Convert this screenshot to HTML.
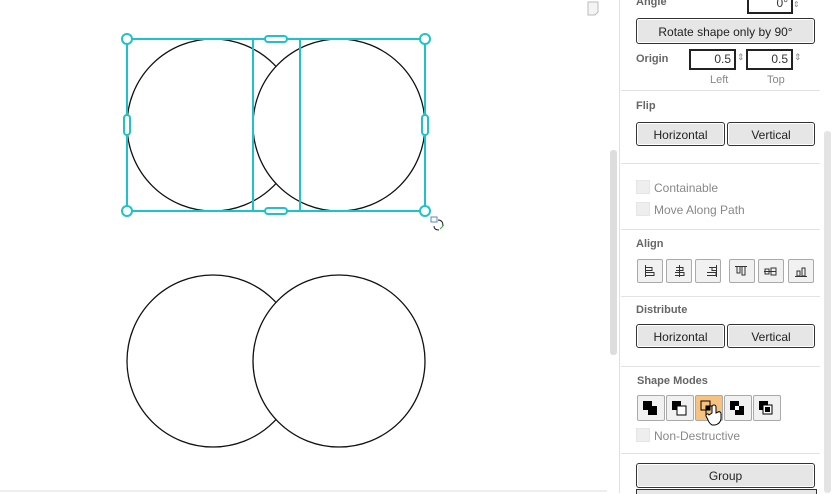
<!DOCTYPE html>
<html><head><style>
body{margin:0;width:838px;height:493px;overflow:hidden;background:#fff;font-family:"Liberation Sans",sans-serif;font-size:12px;color:#333;position:relative}
.a{position:absolute}
.btn{position:absolute;border:1px solid #333;border-radius:3px;background:#e6e6e6;box-shadow:inset 0 0 0 1px #fff;text-align:center;line-height:24px;font-size:12px;color:#222;height:24px;box-sizing:border-box}
.lbl{position:absolute;font-size:11px;color:#666;font-weight:bold}
.hr{position:absolute;left:621px;width:199px;height:1px;background:#e2e2e2}
.cb{position:absolute;width:12px;height:12px;background:#eee;border:1px solid #e6e6e6}
.ct{position:absolute;font-size:12px;color:#888}
.ib{position:absolute;top:259px;width:26px;height:24px;border:1px solid #aaa;border-radius:2px;background:#f1f1f1;box-sizing:border-box}
.sb{position:absolute;top:395px;width:28px;height:26px;border:1px solid #aaa;border-radius:2px;background:#f1f1f1;box-sizing:border-box}
.in{position:absolute;border:2px solid #222;height:21px;box-sizing:border-box;background:#fff;text-align:right;padding-right:3px;font-size:12px;line-height:17px}
</style></head><body>
<svg class="a" style="left:0;top:0" width="610" height="493">
<g fill="#fff" stroke="#111" stroke-width="1.3">
<circle cx="213" cy="125" r="86"/><circle cx="339" cy="125" r="86"/>
<circle cx="213" cy="361" r="86"/><circle cx="339" cy="361" r="86"/>
</g>
<g stroke="#1cc3cc" stroke-width="2" fill="#fff">
<rect x="127" y="39" width="298" height="172" fill="none"/>
<line x1="253" y1="39" x2="253" y2="211"/><line x1="300" y1="39" x2="300" y2="211"/>
<circle cx="127" cy="39" r="5"/><circle cx="425" cy="39" r="5"/><circle cx="127" cy="211" r="5"/><circle cx="425" cy="211" r="5"/>
<rect x="265" y="36" width="22" height="6" rx="3"/><rect x="265" y="208" width="22" height="6" rx="3"/>
<rect x="124" y="115" width="6" height="20" rx="3"/><rect x="422" y="115" width="6" height="20" rx="3"/>
</g>
<rect x="431" y="217" width="6" height="5" fill="none" stroke="#5588cc"/>
<path d="M438 220 q5 0 5 6 M434 226 q0 4 5 4" stroke="#222" fill="none"/><path d="M440 229 l3 -3" stroke="#3a3"/>
<path d="M588 2h10v10l-3 3h-7z" fill="#f4f4f4" stroke="#bbb"/>
<line x1="0" y1="491" x2="607" y2="491" stroke="#ddd"/>
</svg>
<div class="a" style="left:610px;top:150px;width:7px;height:205px;background:#ddd;border-radius:3px"></div>
<div class="a" style="left:619px;top:0;width:1px;height:493px;background:#e0e0e0"></div>
<div class="a" style="left:824px;top:131px;width:7px;height:362px;background:#e4e4e4;border-radius:3px"></div>

<div class="lbl" style="left:636px;top:-4px">Angle</div>
<div class="in" style="left:747px;top:-7px;width:46px">0°</div>
<div class="a" style="left:793px;top:0;font-size:8px;color:#888">⇕</div>
<div class="btn" style="left:636px;top:18px;width:179px;height:26px;line-height:26px">Rotate shape only by 90°</div>
<div class="lbl" style="left:636px;top:53px">Origin</div>
<div class="in" style="left:689px;top:49px;width:47px">0.5</div>
<div class="a" style="left:737px;top:52px;font-size:9px;color:#888">⇕</div>
<div class="in" style="left:746px;top:49px;width:47px">0.5</div>
<div class="a" style="left:794px;top:52px;font-size:9px;color:#888">⇕</div>
<div class="ct" style="left:710px;top:74px;font-size:11px">Left</div>
<div class="ct" style="left:767px;top:74px;font-size:11px">Top</div>
<div class="hr" style="top:90px"></div>
<div class="lbl" style="left:636px;top:100px">Flip</div>
<div class="btn" style="left:636px;top:122px;width:89px">Horizontal</div>
<div class="btn" style="left:727px;top:122px;width:88px">Vertical</div>
<div class="hr" style="top:163px"></div>
<div class="cb" style="left:636px;top:180px"></div><div class="ct" style="left:654px;top:181px">Containable</div>
<div class="cb" style="left:636px;top:202px"></div><div class="ct" style="left:654px;top:203px">Move Along Path</div>
<div class="hr" style="top:229px"></div>
<div class="lbl" style="left:636px;top:238px">Align</div>
<div class="ib" style="left:637px"></div><div class="ib" style="left:666px"></div><div class="ib" style="left:695px"></div>
<div class="ib" style="left:729px"></div><div class="ib" style="left:758px"></div><div class="ib" style="left:788px"></div>
<svg class="a" style="left:637px;top:259px" width="180" height="24" fill="none" stroke="#333" stroke-width="1">
<path d="M8.5 6v12M9 8.5h6v3h-6M9 13.5h8v3h-8"/>
<path d="M42.5 6v12M39 8.5h7v3h-7M38 13.5h9v3h-9"/>
<path d="M79.5 6v12M72 8.5h7M75 8.5v3h4M70 13.5h9v3h-9"/>
<path d="M98 7.5h12M100 8v6h3v-6M105 8v8h3v-8"/>
<path d="M127 12.5h12M128 10h4v5h-4zM134 9h5v7h-5z"/>
<path d="M158 17.5h12M160 12v5h3v-5zM165 9v8h3v-8z"/>
</svg>
<div class="hr" style="top:296px"></div>
<div class="lbl" style="left:636px;top:304px">Distribute</div>
<div class="btn" style="left:636px;top:324px;width:89px">Horizontal</div>
<div class="btn" style="left:727px;top:324px;width:88px">Vertical</div>
<div class="hr" style="top:366px"></div>
<div class="lbl" style="left:637px;top:375px">Shape Modes</div>
<div class="sb" style="left:637px"></div><div class="sb" style="left:666px"></div><div class="sb" style="left:695px;background:#f5c27f"></div><div class="sb" style="left:724px"></div><div class="sb" style="left:753px"></div>
<svg class="a" style="left:637px;top:395px" width="150" height="40">
<rect x="6" y="6" width="9" height="9" fill="#000"/><rect x="11" y="11" width="9" height="9" fill="#000"/>
<rect x="35" y="6" width="9" height="9" fill="#000"/><rect x="40" y="11" width="9" height="9" fill="#fff" stroke="#000"/>
<rect x="64" y="6" width="9" height="9" fill="none" stroke="#000"/><rect x="69" y="11" width="9" height="9" fill="none" stroke="#000"/><rect x="69" y="11" width="4" height="4" fill="#000"/>
<rect x="93" y="6" width="9" height="9" fill="#000"/><rect x="98" y="11" width="9" height="9" fill="#000"/><rect x="98" y="11" width="4" height="4" fill="#fff"/>
<rect x="122" y="6" width="9" height="9" fill="#000"/><rect x="126" y="10" width="9" height="9" fill="#fff" stroke="#000"/><rect x="128" y="12" width="5" height="5" fill="#000"/>
<path d="M75 18v-6a2 2 0 014 0v6l2-1a2 2 0 013 2v5q-1 5-6 6h-3q-3-2-4-5l-2-4a1.5 1.5 0 013-1z" fill="#fff" stroke="#000"/>
</svg>
<div class="cb" style="left:636px;top:428px"></div><div class="ct" style="left:654px;top:429px">Non-Destructive</div>
<div class="hr" style="top:453px"></div>
<div class="btn" style="left:636px;top:463px;width:179px;height:25px">Group</div>
<div class="a" style="left:636px;top:489px;width:179px;height:4px;border:1px solid #333;border-bottom:none;background:#e6e6e6"></div>
</body></html>
